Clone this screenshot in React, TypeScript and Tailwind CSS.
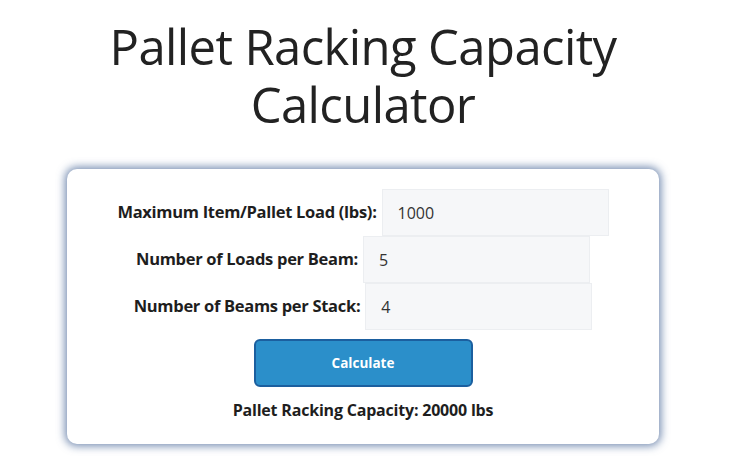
import { useState } from 'react';

const fields = [
  { id: 'load', label: 'Maximum Item/Pallet Load (lbs):' },
  { id: 'loads', label: 'Number of Loads per Beam:' },
  { id: 'beams', label: 'Number of Beams per Stack:' },
];

export default function App() {
  const [values, setValues] = useState<Record<string, string>>({
    load: '1000',
    loads: '5',
    beams: '4',
  });
  const [capacity, setCapacity] = useState<number | null>(20000);

  const handleCalculate = () => {
    const total =
      (parseFloat(values.load) || 0) *
      (parseFloat(values.loads) || 0) *
      (parseFloat(values.beams) || 0);
    setCapacity(total);
  };

  return (
    <div className="min-h-screen bg-white text-[#222] font-['Open_Sans',sans-serif]">
      <div className="w-[726px] flex flex-col items-center">
        <h1 className="mt-[17px] text-center text-[49px] leading-[58px] font-normal text-[#222] tracking-[-0.6px]">
          Pallet Racking Capacity
          <br />
          Calculator
        </h1>

        {/* Calculator card */}
        <div className="mt-[36px] w-[592px] bg-white rounded-[10px] shadow-[0_0_9px_2px_rgba(70,100,150,0.75)] pt-[20px] pb-[22px] flex flex-col items-center">
          {fields.map((f) => (
            <div key={f.id} className="flex items-center justify-center gap-[5px]">
              <label
                htmlFor={f.id}
                className="text-[16.5px] font-bold text-[#1e1e1e] tracking-[-0.3px]"
              >
                {f.label}
              </label>
              <input
                id={f.id}
                value={values[f.id]}
                onChange={(e) => setValues({ ...values, [f.id]: e.target.value })}
                className="w-[227px] h-[47px] px-[15px] bg-[#f6f7f9] border border-[#eceef1] text-[16px] text-[#333] outline-none"
              />
            </div>
          ))}

          <button
            onClick={handleCalculate}
            className="mt-[9px] w-[219px] h-[48px] rounded-[6px] bg-[#2b8fca] border-2 border-[#1b5f9f] text-white text-[13.5px] font-bold"
          >
            Calculate
          </button>

          <p className="mt-[11px] text-[16px] font-bold text-[#1e1e1e] tracking-[-0.2px]">
            Pallet Racking Capacity: {capacity ?? 0} lbs
          </p>
        </div>
      </div>
    </div>
  );
}
